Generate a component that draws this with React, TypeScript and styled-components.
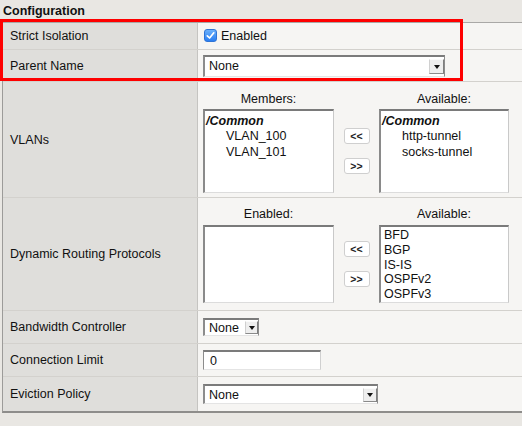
import styled, { createGlobalStyle } from 'styled-components';

const GlobalStyle = createGlobalStyle`
  html, body {
    margin: 0;
    padding: 0;
  }
  body {
    background: #e9e7e3;
    font-family: "Liberation Sans", Arial, sans-serif;
    font-size: 12.5px;
    color: #111;
  }
`;

type Group = { name?: string; items: string[] };

const vlanMembers: Group[] = [{ name: '/Common', items: ['VLAN_100', 'VLAN_101'] }];
const vlanAvailable: Group[] = [{ name: '/Common', items: ['http-tunnel', 'socks-tunnel'] }];
const protoEnabled: Group[] = [{ items: [] }];
const protoAvailable: Group[] = [{ items: ['BFD', 'BGP', 'IS-IS', 'OSPFv2', 'OSPFv3'] }];

function App() {
  return (
    <Page>
      <GlobalStyle />
      <Title>Configuration</Title>
      <Table>
        <Row $h={27}>
          <LabelCell>Strict Isolation</LabelCell>
          <ValueCell>
            <CheckLabel>
              <CheckBox>
                <svg width="9" height="9" viewBox="0 0 9 9">
                  <path d="M1.3 4.8 L3.6 7 L7.8 1.8" fill="none" stroke="#fff" strokeWidth="1.7" strokeLinecap="round" strokeLinejoin="round" />
                </svg>
              </CheckBox>
              Enabled
            </CheckLabel>
          </ValueCell>
        </Row>
        <Row $h={32}>
          <LabelCell>Parent Name</LabelCell>
          <ValueCell>
            <Select $w={242} $h={22}>
              <span>None</span>
              <Arrow $size={15} />
            </Select>
          </ValueCell>
        </Row>
        <Row $h={116}>
          <LabelCell>VLANs</LabelCell>
          <ValueCell $top={9}>
            <DualList
              leftTitle="Members:"
              rightTitle="Available:"
              left={vlanMembers}
              right={vlanAvailable}
              listHeight={84}
              gap={3}
            />
          </ValueCell>
        </Row>
        <Row $h={113}>
          <LabelCell>Dynamic Routing Protocols</LabelCell>
          <ValueCell $top={8}>
            <DualList
              leftTitle="Enabled:"
              rightTitle="Available:"
              left={protoEnabled}
              right={protoAvailable}
              listHeight={78}
              gap={4}
            />
          </ValueCell>
        </Row>
        <Row $h={33}>
          <LabelCell>Bandwidth Controller</LabelCell>
          <ValueCell>
            <Select $w={56} $h={18}>
              <span>None</span>
              <Arrow $size={13} />
            </Select>
          </ValueCell>
        </Row>
        <Row $h={33}>
          <LabelCell>Connection Limit</LabelCell>
          <ValueCell>
            <TextInput $w={118}>0</TextInput>
          </ValueCell>
        </Row>
        <Row $h={34} $last>
          <LabelCell>Eviction Policy</LabelCell>
          <ValueCell>
            <Select $w={175} $h={20}>
              <span>None</span>
              <Arrow $size={14} />
            </Select>
          </ValueCell>
        </Row>
      </Table>
      <Highlight />
    </Page>
  );
}

function DualList(props: {
  leftTitle: string;
  rightTitle: string;
  left: Group[];
  right: Group[];
  listHeight: number;
  gap: number;
}) {
  return (
    <Dual $gap={props.gap}>
      <ColTitle>{props.leftTitle}</ColTitle>
      <span />
      <ColTitle>{props.rightTitle}</ColTitle>
      <ListBox $h={props.listHeight}>
        <GroupList groups={props.left} />
      </ListBox>
      <MoveButtons>
        <MoveButton>&lt;&lt;</MoveButton>
        <MoveButton>&gt;&gt;</MoveButton>
      </MoveButtons>
      <ListBox $h={props.listHeight}>
        <GroupList groups={props.right} />
      </ListBox>
    </Dual>
  );
}

function GroupList({ groups }: { groups: Group[] }) {
  return (
    <>
      {groups.map((g, i) => (
        <div key={i}>
          {g.name && <GroupName>{g.name}</GroupName>}
          {g.items.map((it) => (
            <ListItem key={it} $indent={!!g.name}>
              {it}
            </ListItem>
          ))}
        </div>
      ))}
    </>
  );
}

export default App;

const Page = styled.div`
  position: relative;
  width: 522px;
  height: 426px;
  overflow: hidden;
`;

const Title = styled.div`
  height: 22px;
  display: flex;
  align-items: center;
  padding-left: 3px;
  padding-bottom: 1px;
  box-sizing: border-box;
  font-weight: bold;
  font-size: 12.5px;
`;

const Table = styled.div`
  margin-left: 2px;
  width: 520px;
  border-top: 1px solid #a9a8a6;
  border-left: 1px solid #9c9b99;
  border-bottom: 2px solid #8e8d8b;
`;

const Row = styled.div<{ $h: number; $last?: boolean }>`
  display: grid;
  grid-template-columns: 195px 1fr;
  height: ${({ $h }) => $h}px;
  box-sizing: border-box;
  border-bottom: ${({ $last }) => ($last ? 'none' : '1px solid #d3d1cd')};
`;

const LabelCell = styled.div`
  background: #dfdedb;
  border-right: 1px solid #c5c4c1;
  display: flex;
  align-items: center;
  padding-left: 7px;
  box-sizing: border-box;
`;

const ValueCell = styled.div<{ $top?: number }>`
  background: #f6f5f3;
  display: flex;
  align-items: ${({ $top }) => ($top !== undefined ? 'flex-start' : 'center')};
  padding-left: 5px;
  padding-top: ${({ $top }) => $top ?? 0}px;
  box-sizing: border-box;
`;

const CheckLabel = styled.label`
  display: flex;
  align-items: center;
  gap: 4px;
  margin-left: 1px;
  margin-top: -1px;
`;

const CheckBox = styled.span`
  width: 13px;
  height: 13px;
  border-radius: 3px;
  background: linear-gradient(#6cb1fb, #2a7ef2);
  border: 1px solid #2f74d6;
  box-sizing: border-box;
  display: flex;
  align-items: center;
  justify-content: center;
`;

const Select = styled.div<{ $w: number; $h: number }>`
  width: ${({ $w }) => $w}px;
  height: ${({ $h }) => $h}px;
  box-sizing: border-box;
  background: #fff;
  border-top: 2px solid #7b7b7b;
  border-left: 2px solid #8c8c8c;
  border-right: 1px solid #8c8c8c;
  border-bottom: 1px solid #e4e4e4;
  display: flex;
  align-items: center;
  padding-left: 4px;
  span {
    flex: 1;
  }
`;

const Arrow = styled.div<{ $size: number }>`
  width: ${({ $size }) => $size}px;
  height: ${({ $size }) => $size}px;
  box-sizing: border-box;
  background: #eeeeee;
  border-top: 1px solid #fafafa;
  border-left: 1px solid #d0d0d0;
  border-right: 1px solid #7e7e7e;
  border-bottom: 1px solid #8a8a8a;
  display: flex;
  align-items: center;
  justify-content: center;
  &::after {
    content: '';
    border-left: 3px solid transparent;
    border-right: 3px solid transparent;
    border-top: 4px solid #111;
    margin-top: 1px;
  }
`;

const TextInput = styled.div<{ $w: number }>`
  width: ${({ $w }) => $w}px;
  height: 20px;
  box-sizing: border-box;
  background: #fff;
  border-top: 2px solid #7b7b7b;
  border-left: 1px solid #8c8c8c;
  border-right: 1px solid #d0d0d0;
  border-bottom: 1px solid #e4e4e4;
  padding-left: 6px;
  display: flex;
  align-items: center;
`;

const Dual = styled.div<{ $gap: number }>`
  display: grid;
  grid-template-columns: 131px 45px 130px;
  row-gap: ${({ $gap }) => $gap}px;
`;

const ColTitle = styled.div`
  text-align: center;
  line-height: 14px;
  padding-top: 1px;
`;

const ListBox = styled.div<{ $h: number }>`
  height: ${({ $h }) => $h}px;
  box-sizing: border-box;
  background: #fff;
  border-top: 2px solid #7a7a7a;
  border-left: 2px solid #8a8a8a;
  border-right: 1px solid #c9c9c9;
  border-bottom: 1px solid #dcdcdc;
  padding: 1px 0 0 2px;
  line-height: 14.8px;
  overflow: hidden;
`;

const GroupName = styled.div`
  font-weight: bold;
  font-style: italic;
  margin-left: -1px;
  line-height: 16px;
  margin-top: 1px;
`;

const ListItem = styled.div<{ $indent: boolean }>`
  padding-left: ${({ $indent }) => ($indent ? 19 : 1)}px;
  line-height: ${({ $indent }) => ($indent ? 15.5 : 14.8)}px;
`;

const MoveButtons = styled.div`
  display: flex;
  flex-direction: column;
  align-items: center;
  justify-content: center;
  gap: 14px;
`;

const MoveButton = styled.button`
  width: 26px;
  height: 16px;
  padding: 0;
  background: #fff;
  border: 1px solid #cfcfcf;
  border-radius: 3px;
  font-family: "Liberation Sans", Arial, sans-serif;
  font-size: 10.5px;
  font-weight: bold;
  color: #222;
  line-height: 14px;
`;

const Highlight = styled.div`
  position: absolute;
  left: 0;
  top: 19px;
  width: 463px;
  height: 62px;
  box-sizing: border-box;
  border: 3px solid #fe0000;
  pointer-events: none;
`;
